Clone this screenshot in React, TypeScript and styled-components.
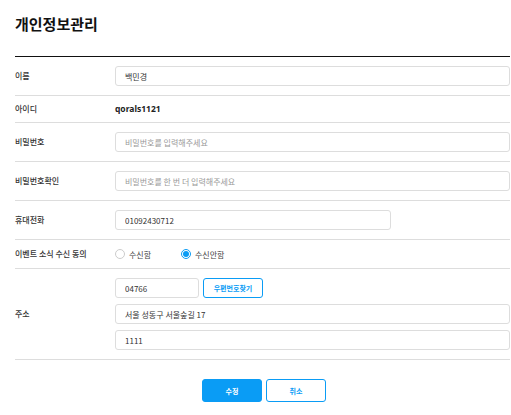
import styled, { createGlobalStyle } from "styled-components";

const Global = createGlobalStyle`
    body {
        margin: 0;
        background: #fff;
        font-family: "Noto Sans CJK KR", "Noto Sans", sans-serif;
        color: #222;
    }
    * {
        box-sizing: border-box;
    }
`;

const Con = styled.div`
    width: 511px;
    padding: 0 1px 0 15px;
`;
const Title = styled.h2`
    margin: 0;
    padding-top: 13px;
    height: 56px;
    font-size: 15px;
    line-height: 22px;
    font-weight: 700;
    color: #111;
`;
const Table = styled.div`
    border-top: 1px solid #111;
`;
const Row = styled.div`
    display: grid;
    grid-template-columns: 100px 1fr;
    align-items: center;
    padding: 9px 0;
    border-bottom: 1px solid #ddd;
`;
const Label = styled.div`
    font-size: 8px;
    line-height: 8px;
    font-weight: 500;
    color: #333;
`;
const Value = styled.div`
    font-size: 8.5px;
    line-height: 8px;
    font-weight: 700;
    color: #222;
    font-family: "Noto Sans", sans-serif;
`;
const Field = styled.div`
    display: flex;
    flex-direction: column;
    gap: 6px;
`;
const Line = styled.div`
    display: flex;
    gap: 4px;
    align-items: center;
`;
const Input = styled.input<{ $w?: number }>`
    width: ${(p) => (p.$w ? `${p.$w}px` : "100%")};
    height: 20px;
    padding: 0 9px;
    border: 1px solid #ddd;
    border-radius: 3px;
    font-family: "Noto Sans CJK KR", "Noto Sans", sans-serif;
    font-size: 8px;
    color: #333;
    outline: none;
    &::placeholder {
        color: #999;
    }
`;
const RadioGroup = styled.div`
    display: flex;
    height: 10px;
    align-items: center;
`;
const RadioItem = styled.label`
    display: flex;
    align-items: center;
    gap: 4px;
    width: 66px;
    font-size: 8px;
    color: #444;
`;
const Dot = styled.span<{ $on?: boolean }>`
    width: 10px;
    height: 10px;
    border-radius: 50%;
    border: 1px solid ${(p) => (p.$on ? "#0a9cf5" : "#ccc")};
    display: flex;
    align-items: center;
    justify-content: center;
    &::after {
        content: "";
        width: 6px;
        height: 6px;
        border-radius: 50%;
        background: ${(p) => (p.$on ? "#0a9cf5" : "transparent")};
    }
`;
const Btn = styled.button<{ $fill?: boolean; $w: number; $h: number }>`
    width: ${(p) => p.$w}px;
    height: ${(p) => p.$h}px;
    border: 1px solid #0a9cf5;
    border-radius: 3px;
    background: ${(p) => (p.$fill ? "#0a9cf5" : "#fff")};
    color: ${(p) => (p.$fill ? "#fff" : "#0a9cf5")};
    font-family: "Noto Sans CJK KR", sans-serif;
    font-size: 7px;
    font-weight: 700;
    padding: 0;
    cursor: pointer;
`;
const Actions = styled.div`
    display: flex;
    justify-content: center;
    gap: 4px;
    padding: 19px 0 0 3px;
`;

const App = () => {
    return (
        <Con>
            <Global />
            <Title>개인정보관리</Title>
            <Table>
                <Row>
                    <Label>이름</Label>
                    <Input defaultValue="백민경" />
                </Row>
                <Row>
                    <Label>아이디</Label>
                    <Value>qorals1121</Value>
                </Row>
                <Row>
                    <Label>비밀번호</Label>
                    <Input type="password" placeholder="비밀번호를 입력해주세요" />
                </Row>
                <Row>
                    <Label>비밀번호확인</Label>
                    <Input type="password" placeholder="비밀번호를 한 번 더 입력해주세요" />
                </Row>
                <Row>
                    <Label>휴대전화</Label>
                    <Input $w={276} defaultValue="01092430712" />
                </Row>
                <Row>
                    <Label>이벤트 소식 수신 동의</Label>
                    <RadioGroup>
                        <RadioItem>
                            <Dot />
                            수신함
                        </RadioItem>
                        <RadioItem>
                            <Dot $on />
                            수신안함
                        </RadioItem>
                    </RadioGroup>
                </Row>
                <Row>
                    <Label>주소</Label>
                    <Field>
                        <Line>
                            <Input $w={84} defaultValue="04766" />
                            <Btn $w={60} $h={20}>우편번호찾기</Btn>
                        </Line>
                        <Input defaultValue="서울 성동구 서울숲길 17" />
                        <Input defaultValue="1111" />
                    </Field>
                </Row>
            </Table>
            <Actions>
                <Btn $fill $w={60} $h={23}>수정</Btn>
                <Btn $w={60} $h={23}>취소</Btn>
            </Actions>
        </Con>
    );
};
export default App;
